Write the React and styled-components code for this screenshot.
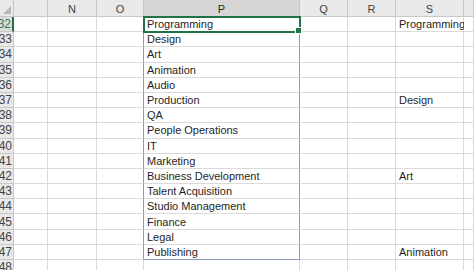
import styled, { createGlobalStyle } from 'styled-components'

const GlobalStyle = createGlobalStyle`
  html, body {
    margin: 0;
    padding: 0;
    background: #ffffff;
    overflow: hidden;
  }
  * {
    box-sizing: border-box;
  }
`

const columns = [
  { letter: '', width: '34px' },
  { letter: 'N', width: '49px' },
  { letter: 'O', width: '47px' },
  { letter: 'P', width: '156px' },
  { letter: 'Q', width: '48px' },
  { letter: 'R', width: '48px' },
  { letter: 'S', width: '68px' },
  { letter: '', width: '1fr' },
]

const departments = [
  'Programming',
  'Design',
  'Art',
  'Animation',
  'Audio',
  'Production',
  'QA',
  'People Operations',
  'IT',
  'Marketing',
  'Business Development',
  'Talent Acquisition',
  'Studio Management',
  'Finance',
  'Legal',
  'Publishing',
]

const groups = { 32: 'Programming', 37: 'Design', 42: 'Art', 47: 'Animation' }

export default function App() {
  const rows = Array.from({ length: 17 }, (_, i) => 32 + i)

  return (
    <>
      <GlobalStyle />
      <Sheet $cols={columns.map((c) => c.width).join(' ')}>
        <Corner>
          <svg width="8" height="8" viewBox="0 0 8 8">
            <polygon points="8,0 8,8 0,8" fill="#b7b7b7" />
          </svg>
        </Corner>
        {columns.map((c, i) => (
          <ColHeader key={i} $selected={c.letter === 'P'}>
            {c.letter}
          </ColHeader>
        ))}

        {rows.map((row) => {
          const index = row - 32
          const inList = index < departments.length
          return [
            <RowHeader key={`h${row}`} $selected={row === 32}>
              <span>{row}</span>
            </RowHeader>,
            ...columns.map((c, ci) => {
              if (c.letter === 'P') {
                return (
                  <Cell
                    key={`${row}-${ci}`}
                    $range={inList}
                    $last={index === departments.length - 1}
                    $active={row === 32}
                  >
                    {inList ? departments[index] : ''}
                  </Cell>
                )
              }
              return (
                <Cell key={`${row}-${ci}`} $beforeRange={c.letter === 'O' && inList}>
                  {c.letter === 'S' ? groups[row] : ''}
                </Cell>
              )
            }),
          ]
        })}
      </Sheet>
    </>
  )
}

const Sheet = styled.div`
  display: grid;
  grid-template-columns: 14px ${(p) => p.$cols};
  grid-template-rows: 17px repeat(16, 15.2px) 15px;
  width: 474px;
  height: 270px;
  overflow: hidden;
  font-family: 'Liberation Sans', Arial, sans-serif;
  font-size: 11px;
  color: #1f1f1f;
`

const Corner = styled.div`
  display: flex;
  align-items: flex-end;
  justify-content: flex-end;
  padding: 0 2px 2px 0;
  background: #e9e9e9;
  border-right: 1px solid #c8c8c8;
  border-bottom: 1px solid #c8c8c8;
`

const ColHeader = styled.div`
  display: flex;
  align-items: center;
  justify-content: center;
  background: ${(p) => (p.$selected ? '#d6d6d6' : '#e9e9e9')};
  color: ${(p) => (p.$selected ? '#2a2a2a' : '#444444')};
  border-right: 1px solid #c8c8c8;
  border-bottom: 1px solid ${(p) => (p.$selected ? '#9fa9a3' : '#c8c8c8')};
  padding-top: 1px;
`

const RowHeader = styled.div`
  display: flex;
  align-items: center;
  justify-content: flex-end;
  overflow: hidden;
  white-space: nowrap;
  padding-right: 1px;
  background: ${(p) => (p.$selected ? '#d9dcd9' : '#e9e9e9')};
  color: ${(p) => (p.$selected ? '#3a7a57' : '#444444')};
  border-bottom: 1px solid #c8c8c8;
  border-right: ${(p) => (p.$selected ? '2px solid #217346' : '1px solid #c8c8c8')};
  font-size: 12px;
`

const Cell = styled.div`
  position: relative;
  display: flex;
  align-items: center;
  padding: 0 3px;
  white-space: nowrap;
  overflow: visible;
  background: #ffffff;
  border-right: 1px solid ${(p) => (p.$range ? '#8b9bb5' : '#dadada')};
  border-bottom: 1px solid ${(p) => (p.$last ? '#8b9bb5' : '#dadada')};
  ${(p) => p.$beforeRange && 'border-right-color: #8b9bb5;'}

  ${(p) =>
    p.$active &&
    `
    z-index: 1;
    outline: 2px solid #217346;
    outline-offset: -1px;
    &::after {
      content: '';
      position: absolute;
      right: -3px;
      bottom: -3px;
      width: 5px;
      height: 5px;
      background: #217346;
      border: 1px solid #ffffff;
    }
  `}
`
